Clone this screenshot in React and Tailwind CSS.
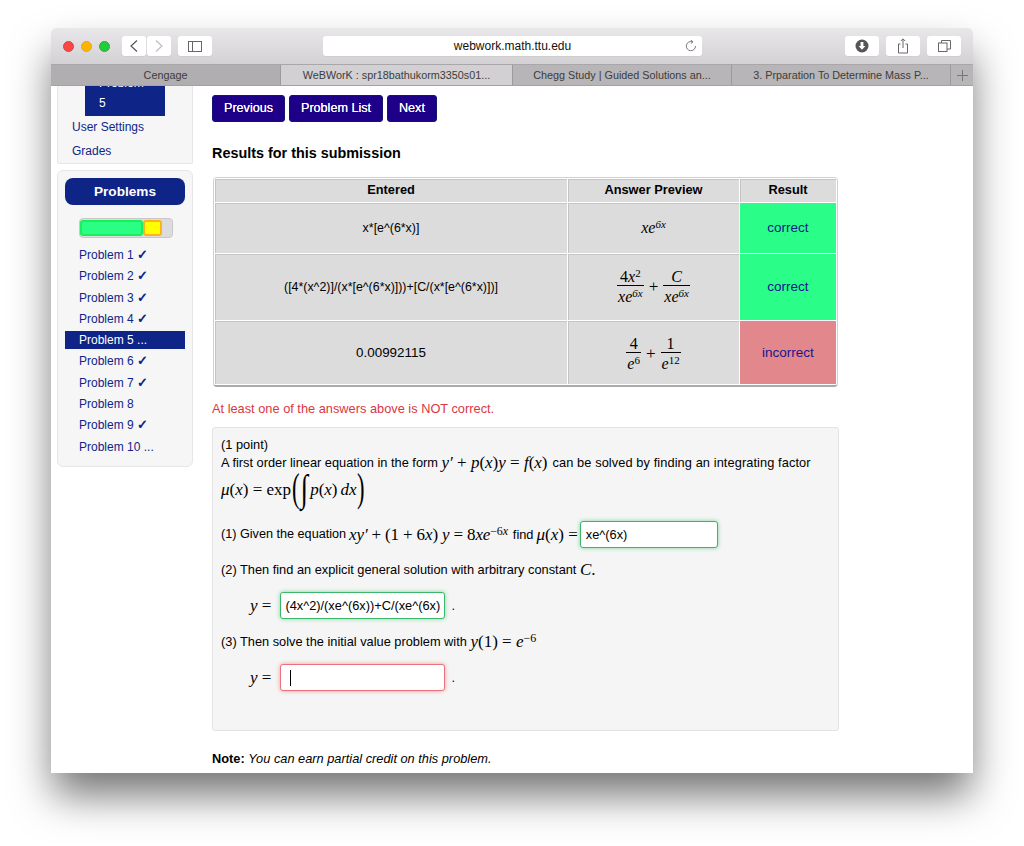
const sans = 'font-["Liberation_Sans",Arial,sans-serif]';
const serif = 'font-["Liberation_Serif","Times_New_Roman",serif]';

const MathText = ({ children, className = '' }) => (
  <span className={`${serif} text-[17px] whitespace-nowrap ${className}`}>{children}</span>
);

const Sup = ({ children }) => (
  <sup className="text-[12px] relative -top-[5px] align-baseline leading-none">{children}</sup>
);

const Frac = ({ top, bottom }) => (
  <span className="inline-flex flex-col items-center align-middle leading-none">
    <span className="px-[1px]">{top}</span>
    <span className="border-t border-black px-[1px] pt-[3px]">{bottom}</span>
  </span>
);

const XE = () => (
  <span>
    <i>xe</i>
    <i className="text-[11px] relative -top-[5px]">6x</i>
  </span>
);

const Traffic = () => (
  <div className="flex gap-[7px]">
    <span className="w-[11px] h-[11px] rounded-full bg-[#fc4545] border border-[#e33e3c]" />
    <span className="w-[11px] h-[11px] rounded-full bg-[#ffb500] border border-[#e8a50c]" />
    <span className="w-[11px] h-[11px] rounded-full bg-[#22cc3c] border border-[#1fb530]" />
  </div>
);

const ToolBtn = ({ children, className = '' }) => (
  <div className={`h-[20px] bg-white rounded-[3px] flex items-center justify-center shadow-[0_1px_0_#cfcfcf] ${className}`}>
    {children}
  </div>
);

const Toolbar = () => (
  <div className="h-[36px] bg-gradient-to-b from-[#e9e7e9] to-[#d3d1d3] flex items-center pl-[12px] pr-[12px]">
    <Traffic />
    <div className="flex gap-[1px] ml-[12px]">
      <ToolBtn className="w-[24px]">
        <svg width="10" height="14" viewBox="0 0 10 14" fill="none" stroke="#555" strokeWidth="1.2"><path d="M8 1.5 2 7l6 5.5" /></svg>
      </ToolBtn>
      <ToolBtn className="w-[24px]">
        <svg width="10" height="14" viewBox="0 0 10 14" fill="none" stroke="#bdbdbd" strokeWidth="1.2"><path d="M2 1.5 8 7l-6 5.5" /></svg>
      </ToolBtn>
    </div>
    <ToolBtn className="w-[34px] ml-[7px]">
      <svg width="14" height="11" viewBox="0 0 14 11" fill="none" stroke="#666" strokeWidth="1"><rect x=".5" y=".5" width="13" height="10" /><path d="M4.5 .5v10" /></svg>
    </ToolBtn>
    <ToolBtn className="w-[379px] ml-[111px] relative">
      <span className={`${sans} text-[12px] text-[#111]`}>webwork.math.ttu.edu</span>
      <svg className="absolute right-[5px] top-[4px]" width="12" height="12" viewBox="0 0 12 12" fill="none" stroke="#777" strokeWidth="1">
        <path d="M7.2 1.7A4.6 4.6 0 1 0 10.5 6" />
        <path d="M5.6 0 8 1.8 5.8 3.6" />
      </svg>
    </ToolBtn>
    <ToolBtn className="w-[34px] ml-[143px]">
      <svg width="14" height="14" viewBox="0 0 14 14"><circle cx="7" cy="7" r="6.5" fill="#555" /><path d="M5.6 3h2.8v4h2L7 10.8 3.6 7h2z" fill="#fff" /></svg>
    </ToolBtn>
    <ToolBtn className="w-[34px] ml-[7px]">
      <svg width="12" height="16" viewBox="0 0 12 16" fill="none" stroke="#666" strokeWidth="1"><path d="M3.5 6H1.5v9h9V6H8.5M6 10V1M3.8 3 6 .8 8.2 3" /></svg>
    </ToolBtn>
    <ToolBtn className="w-[34px] ml-[7px]">
      <svg width="13" height="12" viewBox="0 0 13 12" fill="none" stroke="#666" strokeWidth="1"><rect x=".5" y="3" width="8.5" height="8.5" /><path d="M3.5 3V.5h9v8.5H9" /></svg>
    </ToolBtn>
  </div>
);

const Tab = ({ label, className = '' }) => (
  <div className={`flex items-center justify-center border-r border-[#9c9a9c] text-[10.8px] text-[#3c3c3c] whitespace-nowrap ${className}`}>
    {label}
  </div>
);

const Tabs = () => (
  <div className={`h-[22px] flex bg-[#b7b5b7] border-t border-[#a9a7a9] border-b border-b-[#a3a1a3] ${sans}`}>
    <Tab label="Cengage" className="w-[230px] bg-[#b0aeb0]" />
    <Tab label="WeBWorK : spr18bathukorm3350s01..." className="w-[232px] bg-[#d2d0d2]" />
    <Tab label="Chegg Study | Guided Solutions an..." className="w-[219px]" />
    <Tab label="3. Prparation To Determine Mass P..." className="w-[219px]" />
    <div className="flex-1 flex items-center justify-center">
      <svg width="11" height="11" viewBox="0 0 11 11" stroke="#777" strokeWidth="1"><path d="M5.5 0v11M0 5.5h11" /></svg>
    </div>
  </div>
);

const problems = [
  { n: 1, done: true },
  { n: 2, done: true },
  { n: 3, done: true },
  { n: 4, done: true },
  { n: 5, partial: true, active: true },
  { n: 6, done: true },
  { n: 7, done: true },
  { n: 8 },
  { n: 9, done: true },
  { n: 10, partial: true },
];

const Sidebar = () => (
  <aside className="w-[136px] ml-[6px] shrink-0 flex flex-col gap-[6px] text-[12px] text-[#0f2588]">
    <div className="h-[78px] bg-[#f6f6f6] border border-t-0 border-[#e6e6e6] rounded-b-[2px] relative overflow-hidden">
      <div className="ml-[27px] w-[80px] h-[30px] bg-[#0e2486] text-white pl-[14px] flex flex-col justify-end pb-[3px] leading-[20px]">
        <span className="-mt-[10px]">Problem</span>
        <span>5</span>
      </div>
      <div className="pl-[14px] pt-[1px] flex flex-col">
        <span className="h-[23px] leading-[21px]">User Settings</span>
        <span className="h-[23px] leading-[23px]">Grades</span>
      </div>
    </div>
    <div className="h-[297px] bg-[#f6f6f6] border border-[#e6e6e6] rounded-[6px] px-[7px] pt-[7px]">
      <div className="h-[27px] pt-[1px] rounded-[8px] bg-[#0e2486] text-white text-[13.6px] font-bold flex items-center justify-center">Problems</div>
      <div className="mt-[13px] ml-[14px] w-[94px] h-[20px] bg-[#dcdcdc] border border-[#c8c8c8] rounded-[4px] flex py-[1px]">
        <div className="w-[63px] bg-[#2bfe85] border-2 border-[#18f05a] rounded-[3px]" />
        <div className="w-[19px] bg-[#ffff00] border-2 border-[#fdb31c] rounded-[3px]" />
      </div>
      <ul className="mt-[6.5px] flex flex-col">
        {problems.map((p) => (
          <li key={p.n} className="h-[21.3px] py-[1.5px]">
            <div className={`h-[18.3px] leading-[18px] pl-[14px] ${p.active ? 'bg-[#0e2486] text-white' : ''}`}>
              Problem {p.n}
              {p.done && <span className="font-bold text-[13px]"> ✓</span>}
              {p.partial && ' ...'}
            </div>
          </li>
        ))}
      </ul>
    </div>
  </aside>
);

const NavBtn = ({ children, className = '' }) => (
  <button className={`h-[27px] px-[11px] rounded-[3px] bg-[#1e0088] border border-[#14146e] text-white text-[12.6px] [text-shadow:0_0_0.6px_#fff] ${className}`}>
    {children}
  </button>
);

const Cell = ({ children, className = '' }) => (
  <td className={`bg-[#dcdcdc] text-center align-middle border border-white shadow-[inset_1px_1px_0_#c4c4c4] ${className}`}>{children}</td>
);

const Results = () => (
  <div className="mt-[14px] ml-[1px] w-[625px] rounded-[4px] border border-[#d0d0d0] border-b-2 border-b-[#aaa] overflow-hidden">
    <table className="w-full border-collapse text-[12.4px] text-black table-fixed">
      <colgroup>
        <col className="w-[353px]" />
        <col className="w-[172px]" />
        <col />
      </colgroup>
      <tbody>
        <tr className="h-[24px] font-bold text-[12.8px]">
          <Cell className="pb-[2px]">Entered</Cell>
          <Cell className="pb-[2px]">Answer Preview</Cell>
          <Cell className="pb-[2px]">Result</Cell>
        </tr>
        <tr className="h-[51px]">
          <Cell>x*[e^(6*x)]</Cell>
          <Cell className={`${serif} text-[16px]`}><XE /></Cell>
          <Cell className="!bg-[#2bfe88] !shadow-none text-[#15158c] text-[13.5px]">correct</Cell>
        </tr>
        <tr className="h-[67px]">
          <Cell>([4*(x^2)]/(x*[e^(6*x)]))+[C/(x*[e^(6*x)])]</Cell>
          <Cell className={`${serif} text-[16px]`}>
            <Frac top={<span>4<i>x</i><sup className="text-[11px] relative -top-[5px] align-baseline">2</sup></span>} bottom={<XE />} />
            <span className="mx-[5px] text-[17px] align-middle">+</span>
            <Frac top={<i>C</i>} bottom={<XE />} />
          </Cell>
          <Cell className="!bg-[#2bfe88] !shadow-none text-[#15158c] text-[13.5px]">correct</Cell>
        </tr>
        <tr className="h-[64px]">
          <Cell className="text-[13.4px] pt-[2px]">0.00992115</Cell>
          <Cell className={`${serif} text-[16px] pt-[2px]`}>
            <Frac top="4" bottom={<span><i>e</i><span className="text-[11px] relative -top-[5px]">6</span></span>} />
            <span className="mx-[5px] text-[17px] align-middle">+</span>
            <Frac top="1" bottom={<span><i>e</i><span className="text-[11px] relative -top-[5px]">12</span></span>} />
          </Cell>
          <Cell className="!bg-[#e2888c] !shadow-none text-[#15158c] text-[13.5px] pt-[2px]">incorrect</Cell>
        </tr>
      </tbody>
    </table>
  </div>
);

const Answer = ({ value, ok, className = '', caret }) => (
  <span
    className={`inline-flex items-center h-[27px] px-[5px] bg-white rounded-[3px] border text-[12.8px] text-black whitespace-nowrap overflow-hidden ${
      ok
        ? 'border-[#3cb56c] shadow-[0_0_4px_#7fd39c]'
        : 'border-[#e8737c] shadow-[0_0_4px_#ef9aa0]'
    } ${className}`}
  >
    {value}
    {caret && <span className="ml-[4px] w-[1px] h-[16px] bg-black" />}
  </span>
);

const ProblemBox = () => (
  <div className="mt-[9px] w-[627px] h-[304px] bg-[#f5f5f5] border border-[#e3e3e3] rounded-[3px] px-[8px] pt-[8px] text-[12.8px] text-black">
    <div className="h-[18px] leading-[18px]">(1 point)</div>
    <div className="h-[18px] leading-[18px] flex items-center whitespace-nowrap">
      A first order linear equation in the form&nbsp;
      <MathText><i>y′</i> + <i>p</i>(<i>x</i>)<i>y</i> = <i>f</i>(<i>x</i>)</MathText>
      <span className="ml-[5px] tracking-[0.09px]">can be solved by finding an integrating factor</span>
    </div>
    <div className="h-[36px] flex items-center">
      <MathText className="flex items-center">
        <i>μ</i>(<i>x</i>) = exp
        <span className="inline-block text-[41px] leading-none scale-x-[0.55] -mt-[5px] -mx-[2px]">(</span>
        <i className="inline-block text-[38px] leading-none scale-x-[0.7] -mt-[4px] -mx-[2px]">∫</i>
        <span className="ml-[3px]"><i>p</i>(<i>x</i>)<i className="ml-[3px]">dx</i></span>
        <span className="inline-block text-[41px] leading-none scale-x-[0.55] -mt-[5px] -mx-[3px]">)</span>
      </MathText>
    </div>
    <div className="mt-[13px] h-[27px] flex items-center whitespace-nowrap">
      <span className="text-[12.65px]">(1) Given the equation</span>
      <MathText className="ml-[3px] tracking-[-0.15px]"><i>xy′</i> + (1 + 6<i>x</i>) <i>y</i> = 8<i>xe</i><Sup>−6<i>x</i></Sup></MathText>
      <span className="ml-[5px]">find</span>
      <MathText className="ml-[3px]"><i>μ</i>(<i>x</i>) =</MathText>
      <Answer value="xe^(6x)" ok className="w-[138px] ml-[2px]" />
    </div>
    <div className="mt-[12px] h-[20px] flex items-center whitespace-nowrap">
      (2) Then find an explicit general solution with arbitrary constant&nbsp;
      <MathText><i>C</i>.</MathText>
    </div>
    <div className="mt-[12px] h-[27px] flex items-center pl-[29px] whitespace-nowrap">
      <MathText><i>y</i> =</MathText>
      <Answer value="(4x^2)/(xe^(6x))+C/(xe^(6x)" ok className="w-[165px] ml-[9px] !px-[4px]" />
      <span className="ml-[6px]">.</span>
    </div>
    <div className="mt-[13px] h-[20px] flex items-center whitespace-nowrap">
      (3) Then solve the initial value problem with&nbsp;
      <MathText><i>y</i>(1) = <i>e</i><Sup>−6</Sup></MathText>
    </div>
    <div className="mt-[12px] h-[27px] flex items-center pl-[29px]">
      <MathText><i>y</i> =</MathText>
      <Answer value="" caret className="w-[165px] ml-[9px]" />
      <span className="ml-[6px]">.</span>
    </div>
  </div>
);

const Main = () => (
  <main className="ml-[19px] pt-[9px] flex-1 min-w-0">
    <div className="flex">
      <NavBtn>Previous</NavBtn>
      <NavBtn className="ml-[4px]">Problem List</NavBtn>
      <NavBtn className="ml-[4px]">Next</NavBtn>
    </div>
    <h3 className="mt-[21px] text-[14.4px] font-bold text-black leading-[20px]">Results for this submission</h3>
    <Results />
    <p className="mt-[13px] text-[12.8px] text-[#d9383f] leading-[18px]">At least one of the answers above is NOT correct.</p>
    <ProblemBox />
    <p className="mt-[19px] text-[12.8px] text-black leading-[18px]">
      <b>Note:</b> <i>You can earn partial credit on this problem.</i>
    </p>
  </main>
);

export default function App() {
  return (
    <div className={`w-[1024px] h-[846px] bg-white pt-[28px] pl-[51px] overflow-hidden ${sans}`}>
      <div className="w-[922px] h-[745px] rounded-t-[5px] overflow-hidden bg-white shadow-[0_24px_42px_-2px_rgba(0,0,0,0.55)] flex flex-col">
        <Toolbar />
        <Tabs />
        <div className="flex-1 min-h-0 flex overflow-hidden">
          <Sidebar />
          <Main />
        </div>
      </div>
    </div>
  );
}
